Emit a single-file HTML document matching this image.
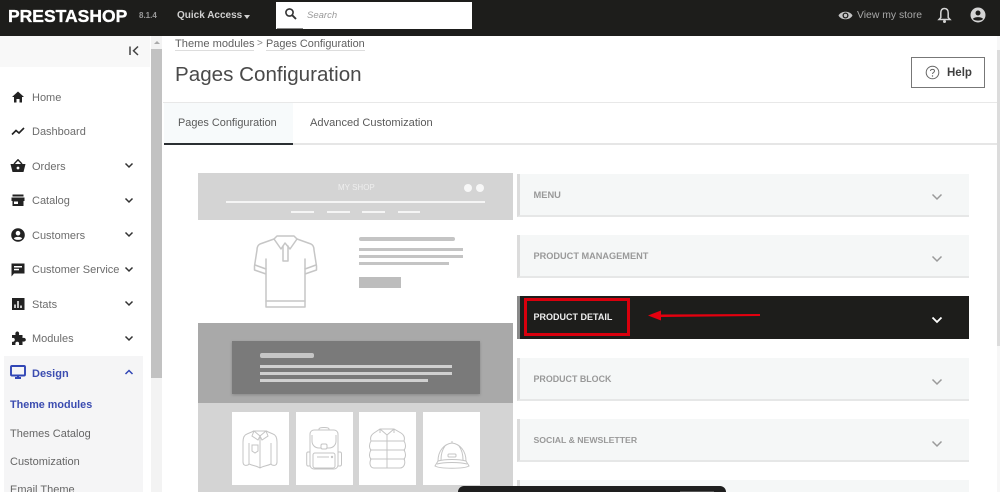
<!DOCTYPE html>
<html><head><meta charset="utf-8"><style>
html,body{margin:0;padding:0;background:#fff}
#r{position:relative;width:1000px;height:492px;overflow:hidden;background:#fff;font-family:"Liberation Sans",sans-serif;color:#555;filter:blur(.35px)}
#r div,#r svg,#r span.t{position:absolute}
.t{white-space:nowrap;line-height:14px}
.m{font-size:11px;color:#6c6c6c;left:32px}
.ac{left:517px;width:452px;background:#f5f7f7;border-left:3px solid #dcdcdc;border-bottom:2px solid #e6e7e7;box-sizing:border-box}
.al{left:533.500px;font-size:9.200px;color:#999;font-weight:700}
</style></head><body><div id="r">

<!-- Topbar -->
<div style="left:0;top:0;width:1000px;height:35.500px;background:#1d1d1b"></div>
<span class="t" style="left:8px;top:6px;font-size:17.500px;line-height:20px;font-weight:700;color:#fff;-webkit-text-stroke:.35px #fff">PRESTASHOP</span>
<span class="t" style="left:139px;top:9px;font-size:8px;color:#9a9a9a;font-weight:700">8.1.4</span>
<span class="t" style="left:177px;top:9px;font-size:10px;font-weight:700;color:#d0d0d0">Quick Access</span>
<div style="left:244px;top:15px;width:0;height:0;border:3.500px solid transparent;border-top:4px solid #d0d0d0"></div>
<div style="left:276px;top:2px;width:196px;height:27px;background:#fff"></div>
<div style="left:277px;top:28px;width:26px;height:1px;background:#888"></div>
<svg style="left:284px;top:7px" width="14" height="14" viewBox="0 0 14 14"><circle cx="5.500" cy="5.500" r="3.600" fill="none" stroke="#333" stroke-width="1.600"/><path d="M8.200 8.200L12 12" stroke="#333" stroke-width="1.900"/></svg>
<span class="t" style="left:307px;top:9px;font-size:9.500px;font-style:italic;color:#999">Search</span>
<svg style="left:838px;top:9px" width="15" height="13" viewBox="0 0 15 13"><path d="M0.500 6.500C3 1.500 12 1.500 14.500 6.500C12 11.500 3 11.500 0.500 6.500Z" fill="#c4c4c4"/><circle cx="7.500" cy="6.500" r="3" fill="#1d1d1b"/><circle cx="7.500" cy="6.500" r="1.700" fill="#c4c4c4"/></svg>
<span class="t" style="left:857px;top:9px;font-size:10.400px;color:#a8a8a8">View my store</span>
<svg style="left:937px;top:7px" width="15" height="17" viewBox="0 0 15 17"><path d="M7.500 1.500C4.800 1.500 3.800 3.500 3.800 6V10.500L2 12.500H13L11.200 10.500V6C11.200 3.500 10.200 1.500 7.500 1.500Z" fill="none" stroke="#d4d4d4" stroke-width="1.500"/><circle cx="7.500" cy="14.500" r="1.500" fill="#d4d4d4"/></svg>
<svg style="left:970px;top:7px" width="16" height="16" viewBox="0 0 16 16"><circle cx="8" cy="8" r="7.500" fill="#d4d4d4"/><circle cx="8" cy="6" r="2.500" fill="#1d1d1b"/><path d="M3 12C4 9.500 12 9.500 13 12C11 14.200 5 14.200 3 12Z" fill="#1d1d1b"/></svg>

<!-- Sidebar -->
<div style="left:0;top:36px;width:150px;height:31px;background:#f8f8f8"></div>
<svg style="left:128px;top:45px" width="12" height="12" viewBox="0 0 12 12"><path d="M2 1.500V10M10 1.500L5.500 5.800L10 10" fill="none" stroke="#444" stroke-width="1.500"/></svg>
<svg style="left:11px;top:91px" width="14" height="12" viewBox="0 0 14 12"><path d="M7 .5L13 6H11V11.500H8.500V8H5.500V11.500H3V6H1Z" fill="#222"/></svg>
<span class="t m" style="top:91px">Home</span>
<svg style="left:11px;top:125px" width="14" height="12" viewBox="0 0 14 12"><path d="M1 9.500L5 5.500L8 8L13 3" fill="none" stroke="#222" stroke-width="1.600"/></svg>
<span class="t m" style="top:125px">Dashboard</span>
<svg style="left:10px;top:159px" width="16" height="14" viewBox="0 0 16 14"><path d="M0.500 5H15.500L13.500 13H2.500Z" fill="#222"/><path d="M4 5L8 .8L12 5" fill="none" stroke="#222" stroke-width="1.400"/><circle cx="8" cy="9" r="1.400" fill="#fff"/></svg>
<span class="t m" style="top:160px">Orders</span>
<svg style="left:11px;top:194px" width="14" height="13" viewBox="0 0 14 13"><path d="M1.500 .5H12.500V2.500H1.500ZM.5 3.500H13.500V7H12.500V12H1.500V7H.5Z" fill="#222"/><rect x="3" y="7.500" width="4" height="2.500" fill="#fff"/></svg>
<span class="t m" style="top:194px">Catalog</span>
<svg style="left:11px;top:228px" width="14" height="14" viewBox="0 0 14 14"><circle cx="7" cy="7" r="6.800" fill="#222"/><circle cx="7" cy="5.200" r="2.300" fill="#fff"/><path d="M2.800 10.500C4 8.300 10 8.300 11.200 10.500C9.500 12.400 4.500 12.400 2.800 10.500Z" fill="#fff"/></svg>
<span class="t m" style="top:229px">Customers</span>
<svg style="left:11px;top:263px" width="14" height="14" viewBox="0 0 14 14"><path d="M.5 .5H13.500V10.500H3L.5 13.500Z" fill="#222"/><rect x="3" y="3" width="8" height="1.500" fill="#fff"/><rect x="3" y="5.800" width="5" height="1.500" fill="#fff"/></svg>
<span class="t m" style="top:263px">Customer Service</span>
<svg style="left:12px;top:298px" width="13" height="12" viewBox="0 0 13 12"><rect width="12.500" height="12" fill="#222"/><path d="M3 6.500V10M6 3V10M9 7.500V10" stroke="#fff" stroke-width="1.500"/></svg>
<span class="t m" style="top:298px">Stats</span>
<svg style="left:11px;top:331px" width="15" height="15" viewBox="0 0 15 15"><path d="M1 4H4.500C4 1.500 5 .5 6.300 .5C7.600 .5 8.500 1.500 8 4H11.500V7C14 6.500 14.800 7.500 14.800 8.800C14.800 10 14 11 11.500 10.500V14H8C8.500 11.500 7.500 10.800 6.300 10.800C5 10.800 4 11.500 4.500 14H1V10.800C3 11 3.800 10 3.800 8.800C3.800 7.500 3 6.700 1 7Z" fill="#222"/></svg>
<span class="t m" style="top:332px">Modules</span>

<div style="left:4px;top:356px;width:139px;height:136px;background:#f5f5f6"></div>
<svg style="left:10px;top:365px" width="16" height="15" viewBox="0 0 16 15"><rect x="1" y="1" width="14" height="9.500" rx="1" fill="none" stroke="#3146b5" stroke-width="1.900"/><rect x="5" y="12" width="6" height="2" fill="#3146b5"/><rect x="7" y="10.500" width="2" height="2" fill="#3146b5"/></svg>
<span class="t m" style="top:367px;color:#3b4cb0;font-weight:700">Design</span>
<span class="t" style="left:10px;top:398px;font-size:10.800px;font-weight:700;color:#3b4cb0">Theme modules</span>
<span class="t" style="left:10px;top:427px;font-size:11px;color:#666">Themes Catalog</span>
<span class="t" style="left:10px;top:455px;font-size:11px;color:#666">Customization</span>
<span class="t" style="left:10px;top:483px;font-size:11px;color:#666">Email Theme</span>

<svg style="left:124px;top:162px" width="10" height="7" viewBox="0 0 10 7"><path d="M1.500 1.500L5 5L8.500 1.500" fill="none" stroke="#333" stroke-width="1.500"/></svg>
<svg style="left:124px;top:197px" width="10" height="7" viewBox="0 0 10 7"><path d="M1.500 1.500L5 5L8.500 1.500" fill="none" stroke="#333" stroke-width="1.500"/></svg>
<svg style="left:124px;top:231px" width="10" height="7" viewBox="0 0 10 7"><path d="M1.500 1.500L5 5L8.500 1.500" fill="none" stroke="#333" stroke-width="1.500"/></svg>
<svg style="left:124px;top:266px" width="10" height="7" viewBox="0 0 10 7"><path d="M1.500 1.500L5 5L8.500 1.500" fill="none" stroke="#333" stroke-width="1.500"/></svg>
<svg style="left:124px;top:300px" width="10" height="7" viewBox="0 0 10 7"><path d="M1.500 1.500L5 5L8.500 1.500" fill="none" stroke="#333" stroke-width="1.500"/></svg>
<svg style="left:124px;top:335px" width="10" height="7" viewBox="0 0 10 7"><path d="M1.500 1.500L5 5L8.500 1.500" fill="none" stroke="#333" stroke-width="1.500"/></svg>
<svg style="left:124px;top:369px" width="10" height="7" viewBox="0 0 10 7"><path d="M1.500 5L5 1.500L8.500 5" fill="none" stroke="#3146b5" stroke-width="1.500"/></svg>

<!-- Sidebar scrollbar -->
<div style="left:151px;top:36px;width:11px;height:456px;background:#f3f3f3"></div>
<div style="left:151px;top:49px;width:11px;height:329px;background:#c2c2c2"></div>
<div style="left:154px;top:41px;width:0;height:0;border:3px solid transparent;border-bottom:3px solid #aaa;border-top:0"></div>

<!-- Header -->
<span class="t" style="left:175px;top:37px;font-size:11.100px;color:#5f5f5f">Theme modules</span>
<div style="left:175px;top:50px;width:79px;height:1px;background:#ddd"></div>
<span class="t" style="left:257px;top:37px;font-size:10px;color:#888">&gt;</span>
<span class="t" style="left:266px;top:37px;font-size:10.900px;color:#5f5f5f">Pages Configuration</span>
<div style="left:266px;top:50px;width:99px;height:1px;background:#ddd"></div>
<span class="t" style="left:175px;top:63px;font-size:20.600px;line-height:24px;color:#4a4a4a">Pages Configuration</span>
<div style="left:911px;top:57px;width:74px;height:31px;box-sizing:border-box;border:1px solid #777;background:#fff"></div>
<svg style="left:925px;top:65px" width="15" height="15" viewBox="0 0 15 15"><circle cx="7.500" cy="7.500" r="6.300" fill="none" stroke="#666" stroke-width="1"/><path d="M5.500 6C5.500 3.800 9.500 3.800 9.500 6C9.500 7.500 7.500 7.500 7.500 9" fill="none" stroke="#666" stroke-width="1"/><circle cx="7.500" cy="11" r=".7" fill="#666"/></svg>
<span class="t" style="left:947px;top:66px;font-size:11.500px;font-weight:700;color:#3f3f3f">Help</span>

<!-- Tabs -->
<div style="left:163px;top:102px;width:834px;height:1px;background:#e8e8e8"></div>
<div style="left:164px;top:103px;width:129px;height:40px;background:#f7fafb"></div>
<div style="left:164px;top:143px;width:833px;height:2px;background:#e6e6e6"></div>
<div style="left:164px;top:143px;width:129px;height:1.500px;background:#2b2f33"></div>
<span class="t" style="left:178px;top:116px;font-size:10.900px;color:#5a5a5a">Pages Configuration</span>
<span class="t" style="left:310px;top:116px;font-size:11.100px;color:#5a5a5a">Advanced Customization</span>

<!-- Page scrollbar -->
<div style="left:997px;top:36px;width:3px;height:456px;background:#f7f7f7"></div>
<div style="left:997px;top:50px;width:3px;height:296px;background:#dcdcdc"></div>

<!-- Preview -->
<div style="left:198px;top:173px;width:315px;height:47px;background:#d4d4d4"></div>
<span class="t" style="left:338px;top:181px;font-size:8px;color:#eee">MY SHOP</span>
<div style="left:464px;top:184px;width:8px;height:8px;border-radius:50%;background:#f7f7f7"></div>
<div style="left:476px;top:184px;width:8px;height:8px;border-radius:50%;background:#f7f7f7"></div>
<div style="left:226px;top:201px;width:259px;height:2px;background:#f5f5f5"></div>
<div style="left:291px;top:211px;width:23px;height:2px;background:#f5f5f5"></div>
<div style="left:327px;top:211px;width:23px;height:2px;background:#f5f5f5"></div>
<div style="left:362px;top:211px;width:23px;height:2px;background:#f5f5f5"></div>
<div style="left:398px;top:211px;width:22px;height:2px;background:#f5f5f5"></div>
<svg style="left:250px;top:234px" width="72" height="76" viewBox="0 0 72 76"><g fill="none" stroke="#c6c6c6" stroke-width="1.500" stroke-linejoin="round" stroke-linecap="round"><path d="M24 5L10 10C8 11 7 13 7 16L4.500 32V36L16 40M16 25V73H55V25M47 5L61 10C63 11 64 13 64 16L66.500 32V36L55 40"/><path d="M5 31L16 35M66 31L55 35M16 67H55"/><path d="M24 5L27 2H44L47 5L40 15L35 9L31 15Z"/><path d="M33 12V27H38V12"/></g></svg>
<div style="left:359px;top:237px;width:96px;height:4px;border-radius:2px;background:#c4c4c4"></div>
<div style="left:359px;top:248px;width:104px;height:2.500px;background:#c4c4c4"></div>
<div style="left:359px;top:255px;width:104px;height:2.500px;background:#c4c4c4"></div>
<div style="left:359px;top:262px;width:90px;height:2.500px;background:#c4c4c4"></div>
<div style="left:359px;top:277px;width:42px;height:11px;background:#bdbdbd"></div>

<div style="left:198px;top:323px;width:315px;height:80px;background:#a9a9a9"></div>
<div style="left:232px;top:341px;width:248px;height:53px;background:#7a7a7a;box-shadow:0 1px 3px rgba(0,0,0,.2)"></div>
<div style="left:260px;top:353px;width:54px;height:5px;border-radius:2px;background:#c6c6c6"></div>
<div style="left:260px;top:365px;width:192px;height:2.500px;background:#d0d0d0"></div>
<div style="left:260px;top:372px;width:192px;height:2.500px;background:#d0d0d0"></div>
<div style="left:260px;top:379px;width:168px;height:2.500px;background:#d0d0d0"></div>
<div style="left:198px;top:403px;width:315px;height:89px;background:#d4d4d4"></div>
<div style="left:232px;top:412px;width:56.500px;height:73px;background:#fff"></div>
<div style="left:295.500px;top:412px;width:57px;height:73px;background:#fff"></div>
<div style="left:359px;top:412px;width:57px;height:73px;background:#fff"></div>
<div style="left:423px;top:412px;width:57px;height:73px;background:#fff"></div>
<svg style="left:240px;top:428px" width="40" height="44" viewBox="0 0 40 44"><g fill="none" stroke="#c4c4c4" stroke-width="1"><path d="M14 3L7 6C4 7 3 10 3 14V34C3 37 5 38 8 37L9 36V15M9 36C14 38 17 38 20 40C23 38 27 38 31 36V15M31 36L32 37C35 38 37 37 37 34V14C37 10 36 7 33 6L26 3"/><path d="M14 3H26L20 8ZM14 3L12 8L18 12L20 8L22 12L28 8L26 3M20 8V40"/><path d="M12 17H18V23L15 25L12 23Z"/></g></svg>
<svg style="left:305px;top:426px" width="38" height="46" viewBox="0 0 38 46"><g fill="none" stroke="#c4c4c4" stroke-width="1"><rect x="5" y="4" width="28" height="39" rx="4"/><path d="M14 4V3C14 1 24 1 24 3V4"/><path d="M7 9V15C7 19 10 22 14 22H24C28 22 31 19 31 15V9"/><rect x="16" y="18" width="6" height="5" rx="1.500" fill="#fff"/><rect x="8" y="27" width="22" height="15" rx="2"/><path d="M12 31H24"/><circle cx="27" cy="31" r=".7"/><path d="M5 26H3C2 26 1.700 27 1.700 28V38C1.700 39 2 40 3 40H5M33 26H35C36 26 36.500 27 36.500 28V38C36.500 39 36 40 35 40H33"/></g></svg>
<svg style="left:368px;top:426px" width="40" height="46" viewBox="0 0 40 46"><g fill="none" stroke="#c4c4c4" stroke-width="1"><path d="M12 3H26L33 7C36 9 37 12 36 15C38 18 38 22 36 24C38 27 38 31 36 33C38 37 36 42 32 42H6C2 42 1 37 3 33C1 31 1 27 3 24C1 22 1 18 3 15C2 12 3 9 6 7Z"/><path d="M12 3L19 9L26 3M19 9V42M3 15H36M2 24H37M2 33H37M12 3V7M26 3V7"/></g></svg>
<svg style="left:434px;top:439px" width="36" height="32" viewBox="0 0 36 32"><g fill="none" stroke="#c4c4c4" stroke-width="1"><path d="M4 22C4 12 10 5 18 4C26 5 32 12 32 22"/><path d="M18 2V4M11 7C8 11 7 16 7 21M25 7C28 11 29 16 29 21"/><rect x="14" y="15" width="8" height="3" rx="1"/><path d="M4 22C11 20 25 20 32 22L35 27C30 30 6 30 1 27Z"/><path d="M3 25C10 23 26 23 33 25"/></g></svg>

<!-- Accordions -->
<div class="ac" style="top:174px;height:43px"></div>
<span class="t al" style="top:188px;font-size:9.300px">MENU</span>
<div class="ac" style="top:235px;height:43px"></div>
<span class="t al" style="top:249px">PRODUCT MANAGEMENT</span>
<div style="left:517px;top:296px;width:452px;height:43px;background:#1d1d1b;border-left:3px solid #8a8a8a;box-sizing:border-box"></div>
<div style="left:524px;top:298px;width:106px;height:38px;box-sizing:border-box;border:3px solid #d9000d"></div>
<span class="t" style="left:533.500px;top:310px;font-size:9px;color:#eee;font-weight:700">PRODUCT DETAIL</span>
<svg style="left:647px;top:309px" width="115" height="13" viewBox="0 0 115 13"><path d="M1 6.500L14 1.500V5.500L113 5V7L14 8V11.500Z" fill="#e4000f"/></svg>
<div class="ac" style="top:358px;height:43px"></div>
<span class="t al" style="top:372px;font-size:8.900px">PRODUCT BLOCK</span>
<div class="ac" style="top:419px;height:43px"></div>
<span class="t al" style="top:433px;font-size:8.700px">SOCIAL &amp; NEWSLETTER</span>
<div style="left:517px;top:480px;width:452px;height:12px;background:#f5f7f7;border-left:3px solid #dcdcdc;box-sizing:border-box"></div>

<svg style="left:931px;top:193px" width="12" height="9" viewBox="0 0 12 9"><path d="M1.500 1.500L6 6L10.500 1.500" fill="none" stroke="#9a9a9a" stroke-width="1.500"/></svg>
<svg style="left:931px;top:255px" width="12" height="9" viewBox="0 0 12 9"><path d="M1.500 1.500L6 6L10.500 1.500" fill="none" stroke="#9a9a9a" stroke-width="1.500"/></svg>
<svg style="left:931px;top:316px" width="12" height="9" viewBox="0 0 12 9"><path d="M1.500 1.500L6 6L10.500 1.500" fill="none" stroke="#fff" stroke-width="1.800"/></svg>
<svg style="left:931px;top:378px" width="12" height="9" viewBox="0 0 12 9"><path d="M1.500 1.500L6 6L10.500 1.500" fill="none" stroke="#9a9a9a" stroke-width="1.500"/></svg>
<svg style="left:931px;top:440px" width="12" height="9" viewBox="0 0 12 9"><path d="M1.500 1.500L6 6L10.500 1.500" fill="none" stroke="#9a9a9a" stroke-width="1.500"/></svg>

<!-- Bottom overlay bar -->
<div style="left:458px;top:486px;width:268px;height:10px;border-radius:6px 6px 0 0;background:#1e1e1e"></div>
<div style="left:680px;top:491px;width:34px;height:1px;background:#555"></div>

</div></body></html>
